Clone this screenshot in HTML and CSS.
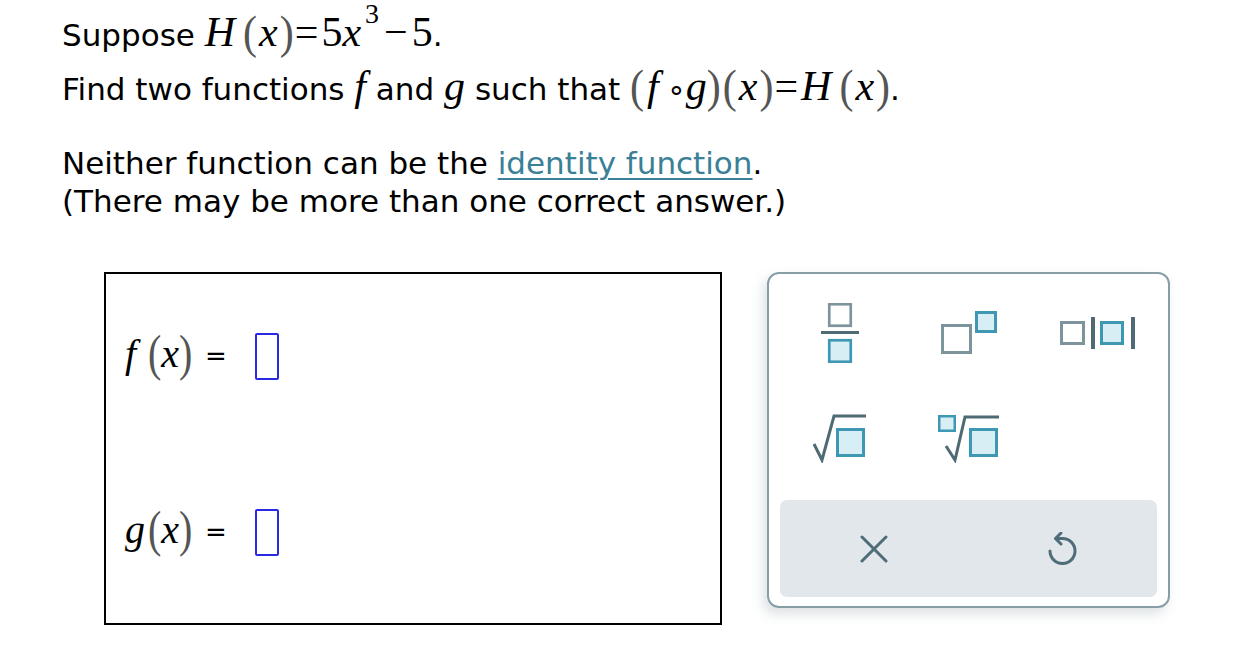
FILE: index.html
```html
<!DOCTYPE html>
<html>
<head>
<meta charset="utf-8">
<link rel="stylesheet" href="styles.css">
</head>
<body>
<div class="q">
  <div class="line l1">Suppose <span class="m"><i>H</i><span class="p sp">(</span><i class="ix">x</i><span class="p">)</span><span class="op">=</span>5<i>x</i><span class="sup">3</span><span class="op mi">−</span>5</span>.</div>
  <div class="line l2">Find two functions <i class="m">f</i> and <i class="m">g</i> such that <span class="m"><span class="p">(</span><i class="if">f</i><span class="comp">∘</span><i>g</i><span class="p">)</span><span class="p pp">(</span><i class="ix">x</i><span class="p">)</span><span class="op">=</span><i>H</i><span class="p sp">(</span><i class="ix">x</i><span class="p">)</span></span>.</div>
</div>
<p class="note">Neither function can be the <a class="link" href="#">identity function</a>.<br>(There may be more than one correct answer.)</p>
<div class="work">
  <div class="answer">
    <div class="arow">
      <span class="am"><i class="lt">f</i><span class="bp">(</span><i>x</i><span class="bp">)</span></span>
      <span class="eq">=</span>
      <span class="slot"></span>
    </div>
    <div class="arow">
      <span class="am"><i class="lt">g</i><span class="bp">(</span><i>x</i><span class="bp">)</span></span>
      <span class="eq">=</span>
      <span class="slot"></span>
    </div>
  </div>
  <div class="pad">
    <div class="keys">
      <div class="key">
        <svg width="40" height="60" viewBox="0 0 40 60">
          <rect x="9.25" y="1.25" width="21.5" height="21.5" fill="#fff" stroke="#7d949d" stroke-width="2.7"/>
          <rect x="1" y="28" width="38" height="3" fill="#4e6a74"/>
          <rect x="9.25" y="37.25" width="21.5" height="21.5" fill="#d6eef4" stroke="#3f98b3" stroke-width="2.7"/>
        </svg>
      </div>
      <div class="key">
        <svg width="58" height="46" viewBox="0 0 58 46">
          <rect x="2.5" y="15.5" width="28" height="27" fill="#fff" stroke="#7d949d" stroke-width="3"/>
          <rect x="36.5" y="2.5" width="19" height="19" fill="#d6eef4" stroke="#3f98b3" stroke-width="3"/>
        </svg>
      </div>
      <div class="key">
        <svg width="78" height="36" viewBox="0 0 78 36">
          <rect x="2.5" y="7.5" width="22" height="21" fill="#fff" stroke="#7d949d" stroke-width="3"/>
          <rect x="32" y="2" width="4" height="32" fill="#4e6a74"/>
          <rect x="42.5" y="7.5" width="21" height="21" fill="#d6eef4" stroke="#3f98b3" stroke-width="3"/>
          <rect x="72" y="2" width="4" height="32" fill="#4e6a74"/>
        </svg>
      </div>
      <div class="key">
        <svg width="56" height="50" viewBox="0 0 56 50">
          <path d="M2 31 L10 47 L22 3 L54 3" fill="none" stroke="#4e6a74" stroke-width="3"/>
          <rect x="25.5" y="16.5" width="26" height="26" fill="#d6eef4" stroke="#3f98b3" stroke-width="3"/>
        </svg>
      </div>
      <div class="key">
        <svg width="64" height="50" viewBox="0 0 64 50">
          <rect x="2.25" y="3.25" width="15.5" height="14.5" fill="#d6eef4" stroke="#3f98b3" stroke-width="2.5"/>
          <path d="M9 33 L18 47 L28 4 L62 4" fill="none" stroke="#4e6a74" stroke-width="3"/>
          <rect x="33.5" y="16.5" width="26" height="26" fill="#d6eef4" stroke="#3f98b3" stroke-width="3"/>
        </svg>
      </div>
      <div class="key"></div>
    </div>
    <div class="actions">
      <div class="act">
        <svg width="28" height="28" viewBox="0 0 28 28">
          <path d="M2 2 L26 26 M26 2 L2 26" fill="none" stroke="#4e6d78" stroke-width="3" stroke-linecap="round"/>
        </svg>
      </div>
      <div class="act">
        <svg width="32" height="34" viewBox="0 0 32 34">
          <path d="M3 19 A12.5 12.5 0 1 0 15.5 6.5 L9 6.5" fill="none" stroke="#4e6d78" stroke-width="3" stroke-linecap="round"/>
          <path d="M14 1 L8.5 6.5 L14 12" fill="none" stroke="#4e6d78" stroke-width="3" stroke-linecap="round" stroke-linejoin="round"/>
        </svg>
      </div>
    </div>
  </div>
</div>
</body>
</html>
```

FILE: styles.css
```css
html, body {
  margin: 0;
  padding: 0;
  background: #fff;
}
body {
  font-family: "DejaVu Sans", Verdana, sans-serif;
  font-size: 31px;
  color: #000;
}
.q {
  padding: 8px 0 0 62px;
}
.line {
  line-height: 54px;
  white-space: nowrap;
}
.m, .m i {
  font-family: "Liberation Serif", "Times New Roman", serif;
  font-size: 42px;
  line-height: 30px;
}
.m i, i.m {
  font-style: italic;
}
.m .p {
  color: #555;
  display: inline-block;
  transform: scaleY(1.12);
}
.m .sp {
  margin-left: 8px;
}
.m .pp {
  margin-left: 2px;
}
.ix {
  margin: 0 2px;
}
.if {
  margin-left: 3px;
  margin-right: 8px;
}
.op {
  margin: 0 3px 0 1px;
}
.op.mi {
  margin: 0 4px 0 3px;
}
.sup {
  font-size: 28px;
  vertical-align: 23px;
  line-height: 0;
  margin-left: 4px;
  margin-right: 2px;
}
.comp {
  font-size: 30px;
}
.note {
  margin: 28px 0 0 62px;
  line-height: 38px;
}
.link {
  color: #3a8096;
  text-decoration: underline;
  text-decoration-thickness: 2px;
  text-underline-offset: 4px;
}
.work {
  display: flex;
  align-items: flex-start;
  margin: 52px 0 0 104px;
  gap: 45px;
}
.answer {
  width: 614px;
  height: 349px;
  border: 2px solid #000;
  display: flex;
  flex-direction: column;
  gap: 129px;
}
.answer::before {
  content: "";
  height: 59px;
  margin-bottom: -129px;
}
.arow {
  display: flex;
  align-items: center;
  height: 47px;
  padding-left: 19px;
}
.am {
  font-family: "Liberation Serif", "Times New Roman", serif;
  font-size: 40px;
  line-height: 47px;
  white-space: nowrap;
  width: 80px;
  margin-bottom: 6px;
}
.am i {
  font-style: italic;
}
.am .lt {
  display: inline-block;
  width: 23px;
}
.bp {
  color: #555;
  display: inline-block;
  transform: scaleY(1.25);
}
.eq {
  font-family: "DejaVu Sans", Verdana, sans-serif;
  font-size: 26px;
  line-height: 47px;
}
.slot {
  width: 20px;
  height: 43px;
  border: 2px solid #2a2ae6;
  border-radius: 2px;
  margin-left: 28px;
}
.pad {
  width: 399px;
  height: 332px;
  border: 2px solid #879ea6;
  border-radius: 12px;
  box-shadow: -4px 6px 12px rgba(120, 140, 150, 0.25);
  display: flex;
  flex-direction: column;
}
.keys {
  display: grid;
  grid-template-columns: repeat(3, 129px);
  grid-template-rows: 105px 105px;
  padding: 6px 0 0 6.5px;
}
.key {
  display: flex;
  align-items: center;
  justify-content: center;
}
.actions {
  margin: 10px 11px 0 11px;
  height: 97px;
  background: #e1e7ea;
  border-radius: 7px;
  display: grid;
  grid-template-columns: 1fr 1fr;
}
.act {
  display: flex;
  align-items: center;
  justify-content: center;
}
```
